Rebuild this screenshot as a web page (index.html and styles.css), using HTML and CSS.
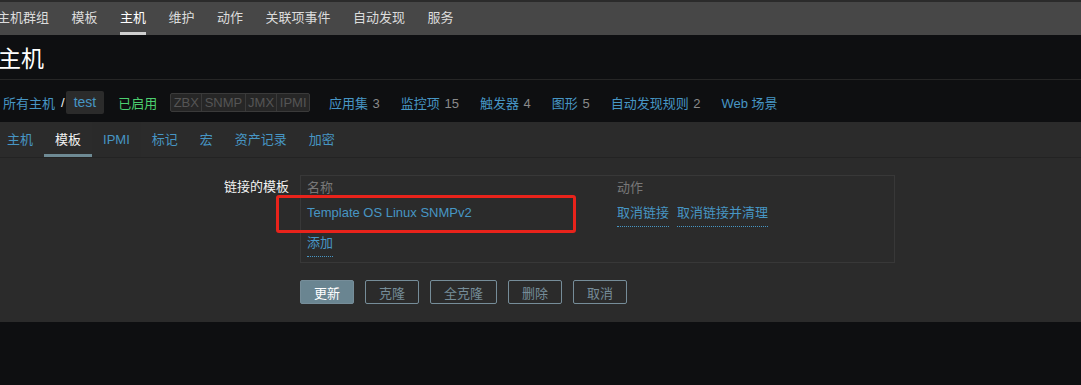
FILE: index.html
```html
<!doctype html>
<html>
<head>
<meta charset="utf-8">
<title>主机</title>
<link rel="stylesheet" href="styles.css">
</head>
<body>
	<div class="topstrip"></div>
	<ul class="mainnav">
		<li>主机群组</li>
		<li>模板</li>
		<li class="on">主机</li>
		<li>维护</li>
		<li>动作</li>
		<li>关联项事件</li>
		<li>自动发现</li>
		<li>服务</li>
	</ul>
	<div class="header">
		<h1>主机</h1>
	</div>
	<div class="crumbs">
		<a class="lnk">所有主机</a>
		<span class="sep">/</span>
		<span class="cur">test</span>
		<span class="enabled">已启用</span>
		<span class="avail"><em>ZBX</em><em>SNMP</em><em>JMX</em><em>IPMI</em></span>
		<a class="lnk">应用集 <i>3</i></a>
		<a class="lnk">监控项 <i>15</i></a>
		<a class="lnk">触发器 <i>4</i></a>
		<a class="lnk">图形 <i>5</i></a>
		<a class="lnk">自动发现规则 <i>2</i></a>
		<a class="lnk">Web 场景</a>
	</div>
	<div class="panel">
		<ul class="tabs">
			<li>主机</li>
			<li class="on">模板</li>
			<li class="dim">IPMI</li>
			<li>标记</li>
			<li>宏</li>
			<li>资产记录</li>
			<li>加密</li>
		</ul>
		<div class="form">
			<div class="row">
				<label>链接的模板</label>
				<div class="tplbox">
					<div class="trow thead"><span class="c1">名称</span><span>动作</span></div>
					<div class="trow"><span class="c1"><a class="blue">Template OS Linux SNMPv2</a></span><span class="acts"><a class="dot">取消链接</a><a class="dot">取消链接并清理</a></span></div>
					<div class="trow add"><a class="dot">添加</a></div>
				</div>
			</div>
			<div class="buttons">
				<button class="main">更新</button>
				<button>克隆</button>
				<button>全克隆</button>
				<button>删除</button>
				<button>取消</button>
			</div>
		</div>
		<div class="mark"></div>
	</div>
</body>
</html>
```

FILE: styles.css
```css
*{ margin:0; padding:0; list-style:none; box-sizing:border-box; }
body{ background:#0e0f11; font-family:"Liberation Sans", "Noto Sans CJK SC", sans-serif; font-size:13px; color:#f2f2f2; }
a{ cursor:pointer; }

.topstrip{ height:2px; background:#2b2b2b; }
.mainnav{ display:flex; gap:22.5px; height:33px; background:#474747; margin-left:-3px; }
.mainnav li{ line-height:31px; color:#dcdcdc; border-bottom:3px solid transparent; }
.mainnav li.on{ color:#fff; border-bottom-color:#cfcfcf; }

.header{ height:45px; border-bottom:1px solid #262626; margin-left:-2px; }
.header h1{ font-size:23px; font-weight:normal; line-height:48px; color:#fff; }

.crumbs{ display:flex; align-items:center; height:42px; padding:3px 0 0 3px; }
.lnk{ color:#4796c4; margin-right:21px; }
.lnk i{ font-style:normal; color:#8a8a8a; margin-left:1px; }
.crumbs .lnk:first-child{ margin-right:6px; }
.sep{ color:#f2f2f2; margin-right:1px; }
.cur{ background:#2b2b2b; color:#4796c4; border-radius:2px; padding:0 8px; line-height:23px; margin-right:14px; font-size:14px; }
.enabled{ color:#4ccf6f; margin-right:13px; }
.avail{ display:flex; border:1px solid #3a3a3a; border-radius:2px; background:#262626; margin-right:19px; }
.avail em{ font-style:normal; color:#555; line-height:17px; padding:0 2.4px; border-left:1px solid #3a3a3a; font-size:13px; }
.avail em:first-child{ border-left:0; }

.panel{ position:relative; background:#2b2b2b; padding-bottom:18px; }
.tabs{ display:flex; height:36px; border-bottom:1px solid #232323; margin-left:-4px; }
.tabs li{ padding:1px 11px 0; line-height:33px; color:#4796c4; border-bottom:3px solid transparent; }
.tabs li.on{ color:#f2f2f2; border-bottom-color:#6e8a94; }
.tabs li.dim{ background:#2a2a2a; }

.form{ padding-top:17px; }
.row{ display:grid; grid-template-columns:289px 595px; column-gap:11px; }
.row label{ text-align:right; line-height:24px; color:#f2f2f2; }
.tplbox{ border:1px solid #383838; padding:0 6px 5px; }
.trow{ display:flex; line-height:26px; }
.trow .c1{ width:310px; }
.thead{ line-height:24px; color:#787878; }
.acts{ display:flex; gap:8px; }
.add{ margin-top:3px; }
.blue{ color:#4796c4; }
.dot{ color:#4796c4; border-bottom:1px dotted #4796c4; }

.buttons{ display:flex; gap:11px; margin:17px 0 0 300px; }
.buttons button{ font:inherit; height:24px; padding:0 13px; background:transparent; color:#768d99; border:1px solid #768d99; border-radius:2px; }
.buttons button.main{ background:#6a8591; color:#fff; }

.mark{ position:absolute; left:276px; top:73px; width:300px; height:38px; border:3px solid #e8231b; border-radius:3px; }
```
